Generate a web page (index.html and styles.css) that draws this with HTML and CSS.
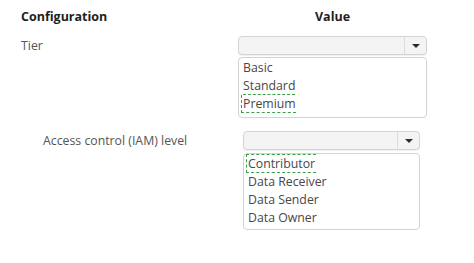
FILE: index.html
```html
<!DOCTYPE html>
<html lang="en">

<head>
    <meta charset="UTF-8">
    <meta name="viewport" content="width=device-width, initial-scale=1.0">
    <title>Configuration</title>
    <link rel="stylesheet" href="styles.css">
</head>

<body>

    <div class="head">
        <span class="h-config">Configuration</span>
        <span class="h-value">Value</span>
    </div>

    <div class="row tier">
        <span class="label">Tier</span>
        <div class="field">
            <div class="select"><span class="arrow"></span></div>
            <ul class="options">
                <li>Basic</li>
                <li><span class="mark-under">Standard</span></li>
                <li><span class="mark-box">Premium</span></li>
            </ul>
        </div>
    </div>

    <div class="row iam">
        <span class="label">Access control (IAM) level</span>
        <div class="field">
            <div class="select"><span class="arrow"></span></div>
            <ul class="options">
                <li><span class="mark-rect">Contributor</span></li>
                <li>Data Receiver</li>
                <li>Data Sender</li>
                <li>Data Owner</li>
            </ul>
        </div>
    </div>

</body>

</html>
```

FILE: styles.css
```css
body {
    margin: 0;
    background-color: #ffffff;
    font-family: "Open Sans", Arial, sans-serif;
    font-size: 12.3px;
    color: #555555;
}

.head {
    display: flex;
    padding: 8px 0 0 21px;
    font-weight: bold;
    font-size: 12.5px;
    color: #1e1e1e;
    line-height: 18px;
}

.h-config {
    width: 294px;
}

.row {
    display: flex;
    align-items: flex-start;
}

.tier {
    padding-left: 21px;
    margin-top: 10px;
}

.tier .label {
    width: 217px;
    padding-top: 1px;
}

.tier .field {
    width: 189px;
}

.iam {
    padding-left: 43px;
    margin-top: 13px;
}

.iam .label {
    width: 200px;
    padding-top: 1px;
}

.iam .field {
    width: 177px;
}

.label {
    line-height: 17px;
}

.select {
    height: 17px;
    border: 1px solid #d3d3d3;
    border-radius: 4px;
    background-color: #f4f4f4;
    display: flex;
    justify-content: flex-end;
    box-shadow: 0 1px 1px rgba(0, 0, 0, 0.06);
}

.arrow {
    width: 21px;
    border-left: 1px solid #dcdcdc;
    display: flex;
    justify-content: center;
    align-items: center;
}

.arrow::after {
    content: "";
    border-left: 4px solid transparent;
    border-right: 4px solid transparent;
    border-top: 4px solid #2b2b2b;
}

.options {
    list-style: none;
    margin: 3px 0 0 0;
    padding: 1px 4px 2px 4px;
    border: 1px solid #d3d3d3;
    border-radius: 4px;
    background-color: #ffffff;
    line-height: 18px;
    color: #474747;
}

.tier .options {
    height: 56px;
    margin-top: 2px;
}

.mark-under {
    border-bottom: 1px dashed #3aa14a;
}

.mark-box {
    border-bottom: 1px dashed #3aa14a;
    border-left: 1px dashed #3aa14a;
    padding-left: 1px;
    margin-left: -2px;
}

.mark-rect {
    border: 1px dashed #3aa14a;
    border-right: none;
    margin-left: -2px;
    padding: 0 1px;
}
```
